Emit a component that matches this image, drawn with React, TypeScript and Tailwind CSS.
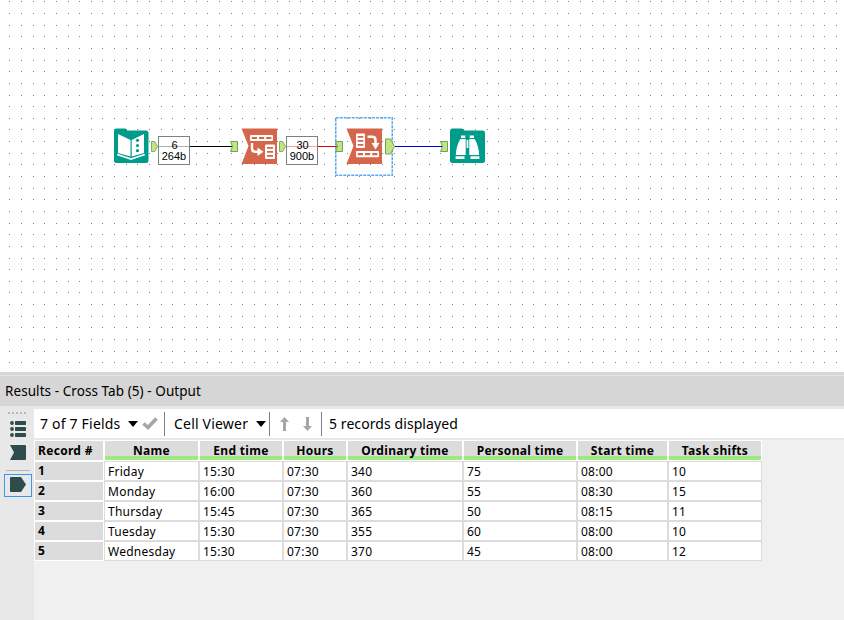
import { ReactNode } from "react"

const columns = ["Name", "End time", "Hours", "Ordinary time", "Personal time", "Start time", "Task shifts"];

const records = [
  ["Friday", "15:30", "07:30", "340", "75", "08:00", "10"],
  ["Monday", "16:00", "07:30", "360", "55", "08:30", "15"],
  ["Thursday", "15:45", "07:30", "365", "50", "08:15", "11"],
  ["Tuesday", "15:30", "07:30", "355", "60", "08:00", "10"],
  ["Wednesday", "15:30", "07:30", "370", "45", "08:00", "12"],
];

const step = 11.645;

function gridPath(){
  let d = "";
  for (let row = 0; row < 32; row++) {
    for (let col = 0; col < 72; col++) {
      d += `M${Math.round(9.3 + col * step)} ${Math.round(1.35 + row * step)}h1v1h-1z`;
    }
  }
  return d;
}

// dotted canvas and the wires between the tools
function Background(){
  return(
    <svg className="h-[372px] w-[844px]" viewBox="0 0 844 372" shapeRendering="crispEdges">
      <path d={gridPath()} fill="#808080"/>
      <rect x="190" y="146" width="44" height="1" fill="#000"/>
      <rect x="318" y="146" width="21" height="1" fill="#e80000"/>
      <rect x="395" y="146" width="49" height="1" fill="#0000f0"/>
    </svg>
  )
}

function Icon({ children }: { children: ReactNode }){
  return(
    <svg className="h-[37px] w-[36px] shrink-0" viewBox="0 0 36 37">
      {children}
    </svg>
  )
}

function InAnchor(){
  return(
    <svg className="h-[11px] w-[8px] shrink-0" viewBox="0 0 8 11">
      <path d="M.5 .5H7.5V10.5H.5L2.5 5.5Z" fill="#c1e57f" stroke="#6fa35c"/>
    </svg>
  )
}

function OutAnchor(){
  return(
    <svg className="h-[11px] w-[7px] shrink-0" viewBox="0 0 7 11">
      <path d="M.5 .5H3.7L6.5 5.5L3.7 10.5H.5Z" fill="#c1e57f" stroke="#7fae66"/>
    </svg>
  )
}

function Count({ line, rows, size }: { line: string, rows: string, size: string }){
  return(
    <div className="relative mt-[8px] h-[29px] w-[32px] self-start border border-[#808080] bg-white pt-[3px] text-center font-['Liberation_Sans',sans-serif] text-[11px] leading-[11px]">
      <div className={"absolute top-[9px] left-0 h-px w-full " + line}/>
      <div className="relative pl-px">{rows}</div>
      <div className="relative">{size}</div>
    </div>
  )
}

function Canvas(){
  return(
    <div className="relative h-[372px] shrink-0 overflow-hidden bg-white">
      <Background/>

      <div className="absolute top-[128px] left-[113px] flex items-center">
        <Icon>
          <path d="M1 3Q1 .5 3 .5H12Q13.5 .5 14 2.5H33Q35.5 2.5 35.5 5V32.5Q35.5 35 33 35H3.5Q1 35 1 32.5Z" fill="#009c8a"/>
          <path d="M5 6L17.5 12V28.5L5 25ZM18.7 12L31 6V25L18.7 28.5Z" fill="#fff"/>
          <path d="M4.2 26.5L18 31L31.8 26.5" fill="none" stroke="#fff" strokeWidth="1.7"/>
          <g fill="#009c8a">
            <circle cx="24.5" cy="12.3" r="1.6"/>
            <circle cx="24.5" cy="17.5" r="1.6"/>
            <circle cx="24.5" cy="22.7" r="1.6"/>
          </g>
        </Icon>
        <div className="flex items-center self-stretch pl-[2px]">
          <OutAnchor/>
          <Count line="bg-[#b0b0b0]" rows="6" size="264b"/>
        </div>
      </div>

      <div className="absolute top-[128px] left-[230px] flex items-center gap-[3px]">
        <InAnchor/>
        <Icon>
          <path d="M.5 .5H36V36H.5L7.5 18Z" fill="#d5654b"/>
          <rect x="9" y="7" width="23" height="6" rx="1" fill="#fff"/>
          <path d="M10.8 10H16M18 10H23.2M25.2 10H30.4" stroke="#d5654b" strokeWidth="2.2"/>
          <path d="M11 15V20.5Q11 23.8 14.5 23.8H17" fill="none" stroke="#fff" strokeWidth="2.4"/>
          <path d="M16.5 19.5L22.5 23.8L16.5 28Z" fill="#fff"/>
          <rect x="24" y="16.5" width="10" height="14.5" rx="1" fill="#fff"/>
          <path d="M26 19.8H32M26 23.8H32M26 27.8H32" stroke="#d5654b" strokeWidth="1.8"/>
        </Icon>
        <div className="-ml-px flex items-center self-stretch">
          <OutAnchor/>
          <Count line="bg-[#f3a6a0]" rows="30" size="900b"/>
        </div>
      </div>

      <div className="absolute top-[117px] left-[335px] flex h-[59px] items-center">
        <svg className="absolute inset-0 h-[59px] w-[58px]" viewBox="0 0 58 59">
          <rect x=".75" y=".75" width="56.5" height="57.5" fill="none" stroke="#5aaaf2" strokeWidth="1.5" strokeDasharray="3 1"/>
        </svg>
        <div className="relative flex items-center gap-[3px]">
          <InAnchor/>
          <Icon>
            <path d="M.5 .5H36V36H.5L7.5 18Z" fill="#d5654b"/>
            <rect x="10" y="5.5" width="9" height="14.5" rx="1" fill="#fff"/>
            <path d="M11.7 8.8H17.3M11.7 12.8H17.3M11.7 16.8H17.3" stroke="#d5654b" strokeWidth="1.8"/>
            <path d="M21.5 8.8H26Q29.5 8.8 29.5 12V15.5" fill="none" stroke="#fff" strokeWidth="2.5"/>
            <path d="M25.5 15H33.5L29.5 21.5Z" fill="#fff"/>
            <rect x="10" y="23" width="23" height="6.3" rx="1" fill="#fff"/>
            <path d="M11.8 26.2H17M19 26.2H24.2M26.2 26.2H31.4" stroke="#d5654b" strokeWidth="2.2"/>
          </Icon>
          <svg className="h-[17px] w-[10px] shrink-0" viewBox="0 0 10 17">
            <path d="M.5 1H5.5L9.5 8.5L5.5 16H.5Z" fill="#c1e57f" stroke="#6fa35c"/>
          </svg>
        </div>
      </div>

      <div className="absolute top-[128px] left-[440px] flex items-center gap-[2px]">
        <InAnchor/>
        <Icon>
          <path d="M0 3Q0 .5 2 .5H11.5Q13 .5 14 2.5H32.5Q35 2.5 35 5V32.5Q35 35 32.5 35H2.5Q0 35 0 32.5Z" fill="#009c8a"/>
          <path d="M11 7.5H15.3V10H11ZM19.7 7.5H24V10H19.7ZM10.3 11H15.7V27H5.8Q6.3 18 10.3 11ZM19.3 11H24.7Q28.7 18 29.2 27H19.3ZM16.6 12H18.4V20H16.6ZM5.6 28.3H14.5V31H5.6ZM20.5 28.3H29.4V31H20.5Z" fill="#fff"/>
        </Icon>
      </div>
    </div>
  )
}

function Sidebar(){
  return(
    <div className="flex w-[34px] shrink-0 flex-col bg-[#e8e8e8] pt-[6px] pl-1">
      <div className="ml-1 h-[2px] w-[18px] bg-[repeating-linear-gradient(90deg,#b8b8b8_0_2px,transparent_2px_4px)]"/>
      <svg className="mt-[7px] ml-[6px] h-[17px] w-[17px] fill-[#2f4b4b]" viewBox="0 0 17 17">
        <circle cx="2" cy="2" r="1.9"/><rect x="5" y="0" width="11" height="4" rx=".7"/>
        <circle cx="2" cy="8" r="1.9"/><rect x="5" y="6" width="11" height="4" rx=".7"/>
        <circle cx="2" cy="14" r="1.9"/><rect x="5" y="12" width="11" height="4" rx=".7"/>
      </svg>
      <svg className="mt-[7px] ml-[6px] h-[15px] w-[16px] fill-[#2f4b4b]" viewBox="0 0 16 15">
        <path d="M0 0H15Q16 0 16 1V14Q16 15 15 15H0L4 7.5Z"/>
      </svg>
      <div className="mt-[10px] ml-[2px] h-px w-[24px] bg-[#b4b4b4]"/>
      <div className="mt-[3px] h-[23px] w-[28px] border border-[#3b97f2] pt-[2px] pl-[5px]">
        <svg className="h-[15px] w-[16px] fill-[#2f4b4b]" viewBox="0 0 16 15">
          <path d="M1 0H11L16 7.5L11 15H1Q0 15 0 14V1Q0 0 1 0Z"/>
        </svg>
      </div>
    </div>
  )
}

function Caret(){
  return(
    <svg className="h-[6px] w-[10px] shrink-0" viewBox="0 0 10 6"><path d="M0 0H10L5 6Z"/></svg>
  )
}

function Toolbar(){
  return(
    <div className="flex h-[29px] items-center bg-white pl-[6px] text-[14px] tracking-[0.08px] whitespace-nowrap">
      <div className="w-[88px] tracking-[0.2px]">7 of 7 Fields</div>
      <Caret/>
      <svg className="ml-[4px] h-[13px] w-[16px]" viewBox="0 0 16 13">
        <path d="M1.5 6.5L6 10.5L14.5 1.5" fill="none" stroke="#a6a6a6" strokeWidth="3.6"/>
      </svg>
      <div className="ml-[6px] h-[24px] w-px bg-[#808080]"/>
      <div className="ml-[9px] w-[82px] tracking-[0.2px]">Cell Viewer</div>
      <Caret/>
      <div className="ml-[3px] h-[24px] w-px bg-[#808080]"/>
      <svg className="ml-[10px] h-[14px] w-[9px] fill-[#a6a6a6]" viewBox="0 0 9 14"><path d="M4.5 0L9 5H6V14H3V5H0Z"/></svg>
      <svg className="ml-[14px] h-[14px] w-[9px] fill-[#a6a6a6]" viewBox="0 0 9 14"><path d="M4.5 14L9 9H6V0H3V9H0Z"/></svg>
      <div className="ml-[9px] h-[24px] w-px bg-[#808080]"/>
      <div className="ml-[7px]">5 records displayed</div>
    </div>
  )
}

function Results(){
  return(
    <table className="w-[728px] table-fixed border-separate border-spacing-0 text-[12px]">
      <colgroup>
        <col className="w-[70px]"/>
        <col className="w-[95px]"/>
        <col className="w-[84px]"/>
        <col className="w-[64px]"/>
        <col className="w-[116px]"/>
        <col className="w-[114px]"/>
        <col className="w-[91px]"/>
        <col className="w-[94px]"/>
      </colgroup>
      <thead>
        <tr className="h-[21px]">
          <th className="border border-white bg-[#dcdcdc] p-0 pt-px pl-[3px] text-left align-top leading-[18px] tracking-[0.3px]">Record #</th>
          {columns.map((name) => (
            <th key={name} className="border border-white bg-[#dcdcdc] p-0">
              <div className="h-[19px] border-b-4 border-[#a0e880] leading-[20px] tracking-[0.3px]">{name}</div>
            </th>
          ))}
        </tr>
      </thead>
      <tbody>
        {records.map((record, index) => (
          <tr key={index} className="h-[20px]">
            <td className="border border-white bg-[#dcdcdc] p-0 pl-[3px] align-top font-bold leading-[17px]">{index + 1}</td>
            {record.map((value, i) => (
              <td key={i} className="border border-[#dcdcdc] bg-white p-0 pt-[2px] pl-[3px] leading-[16px] tracking-[0.25px]">{value}</td>
            ))}
          </tr>
        ))}
      </tbody>
    </table>
  )
}

export default function App(){
  return(
    <div className="flex h-[620px] w-[844px] flex-col overflow-hidden bg-[#f0f0f0] font-['Noto_Sans',sans-serif] text-black">
      <Canvas/>
      <div className="h-[34px] shrink-0 border-t-[3px] border-[#d6d6d6] bg-[#d6d6d6]">
        <div className="border-t border-[#e8e8e8] pl-[5px] text-[13.5px] leading-[30px] tracking-[0.07px]">Results - Cross Tab (5) - Output</div>
      </div>
      <div className="flex grow">
        <Sidebar/>
        <div className="grow">
          <div className="h-[3px] bg-[#e8e8e8]"/>
          <Toolbar/>
          <div className="h-[2px] bg-[#e8e8e8]"/>
          <Results/>
        </div>
      </div>
    </div>
  )
}
